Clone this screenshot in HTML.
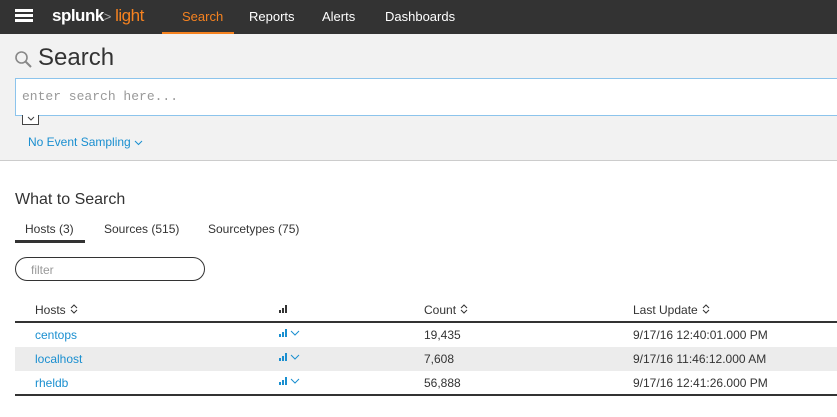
<!DOCTYPE html>
<html><head><style>
*{margin:0;padding:0;box-sizing:border-box}
body{width:837px;height:417px;overflow:hidden;background:#fff;font-family:"Liberation Sans",sans-serif;font-size:12px;color:#333;position:relative}
.a{position:absolute}
.nav{left:0;top:0;width:837px;height:34px;background:#333}
.nav span{position:absolute;top:9px;color:#fff;font-size:13px}
.gray{left:0;top:34px;width:837px;height:127px;background:#f2f2f2;border-bottom:1px solid #ccc}
.row{left:15px;width:822px;height:24px}
.lk{color:#1a8fd0}
</style></head><body>
<div class="a nav">
 <div class="a" style="left:15px;top:9px;width:18px;height:3px;background:#fff"></div>
 <div class="a" style="left:15px;top:14px;width:18px;height:3px;background:#fff"></div>
 <div class="a" style="left:15px;top:19px;width:18px;height:3px;background:#fff"></div>
 <span style="left:52px;top:6px;font-size:17px;letter-spacing:-0.5px;font-weight:bold">splunk<span style="position:static;color:#aaa;font-weight:normal">&gt;</span> <b style="color:#f58220;font-weight:normal">light</b></span>
 <span style="left:182px;color:#f58220">Search</span>
 <div class="a" style="left:162px;top:32px;width:72px;height:3px;background:#f58220"></div>
 <span style="left:249px">Reports</span>
 <span style="left:322px">Alerts</span>
 <span style="left:385px">Dashboards</span>
</div>
<div class="a gray">
 <svg class="a" style="left:14px;top:16px" width="20" height="20"><circle cx="7.5" cy="7.5" r="5.5" fill="none" stroke="#888" stroke-width="1.6"/><line x1="11.5" y1="11.5" x2="17" y2="17" stroke="#888" stroke-width="2"/></svg>
 <div class="a" style="left:38px;top:10px;font-size:24px;color:#333">Search</div>
 <div class="a" style="left:15px;top:44px;width:830px;height:38px;background:#fff;border:1px solid #8cc4ec"></div>
 <div class="a" style="left:22px;top:55px;font-family:'Liberation Mono',monospace;font-size:13px;color:#999">enter search here...</div>
 <div class="a" style="left:22px;top:81px;width:17px;height:10px;border:1px solid #444;border-top:none;background:#fff"><svg class="a" style="left:4px;top:1px" width="8" height="5"><path d="M1 1L4 4L7 1" fill="none" stroke="#444"/></svg></div>
 <div class="a lk" style="left:28px;top:101px">No Event Sampling <svg width="9" height="6"><path d="M1 1L4.5 4.5L8 1" fill="none" stroke="#1a8fd0"/></svg></div>
</div>
<div class="a" style="left:15px;top:191px;font-size:16px">What to Search</div>
<div class="a" style="left:25px;top:222px">Hosts (3)</div>
<div class="a" style="left:15px;top:240px;width:70px;height:3px;background:#333"></div>
<div class="a" style="left:104px;top:222px">Sources (515)</div>
<div class="a" style="left:208px;top:222px">Sourcetypes (75)</div>
<div class="a" style="left:15px;top:257px;width:190px;height:24px;border:1px solid #333;border-radius:12px;padding:5px 15px;color:#999">filter</div>
<div class="a" style="left:35px;top:303px">Hosts <svg width="10" height="10"><path d="M2 4L5 1L8 4M2 6L5 9L8 6" fill="none" stroke="#333"/></svg></div>
<svg class="a" style="left:279px;top:305px" width="9" height="8"><rect x="0" y="5" width="2" height="3" fill="#333"/><rect x="3" y="3" width="2" height="5" fill="#333"/><rect x="6" y="0" width="2" height="8" fill="#333"/></svg>
<div class="a" style="left:424px;top:303px">Count <svg width="10" height="10"><path d="M2 4L5 1L8 4M2 6L5 9L8 6" fill="none" stroke="#333"/></svg></div>
<div class="a" style="left:633px;top:303px">Last Update <svg width="10" height="10"><path d="M2 4L5 1L8 4M2 6L5 9L8 6" fill="none" stroke="#333"/></svg></div>
<div class="a" style="left:15px;top:321px;width:822px;height:2px;background:#333"></div>
<div class="a row" style="top:347px;background:#ececec"></div>
<div class="a" style="left:15px;top:394px;width:822px;height:2px;background:#333"></div>
<div class="a lk" style="left:35px;top:328px">centops</div>
<div class="a lk" style="left:35px;top:352px">localhost</div>
<div class="a lk" style="left:35px;top:376px">rheldb</div>
<svg class="a" style="left:279px;top:329px" width="22" height="60"><g fill="#1a8fd0"><rect x="0" y="5" width="2" height="3"/><rect x="3" y="3" width="2" height="5"/><rect x="6" y="0" width="2" height="8"/><rect x="0" y="29" width="2" height="3"/><rect x="3" y="27" width="2" height="5"/><rect x="6" y="24" width="2" height="8"/><rect x="0" y="53" width="2" height="3"/><rect x="3" y="51" width="2" height="5"/><rect x="6" y="48" width="2" height="8"/></g><g fill="none" stroke="#1a8fd0"><path d="M12 2L16 6L20 2M12 26L16 30L20 26M12 50L16 54L20 50"/></g></svg>
<div class="a" style="left:424px;top:328px">19,435</div>
<div class="a" style="left:424px;top:352px">7,608</div>
<div class="a" style="left:424px;top:376px">56,888</div>
<div class="a" style="left:633px;top:328px">9/17/16 12:40:01.000 PM</div>
<div class="a" style="left:633px;top:352px">9/17/16 11:46:12.000 AM</div>
<div class="a" style="left:633px;top:376px">9/17/16 12:41:26.000 PM</div>
</body></html>
